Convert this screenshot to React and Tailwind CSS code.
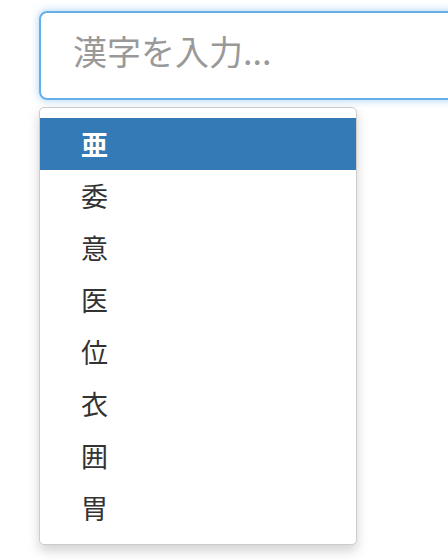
import { useState } from "react";

const kanji = ["亜", "委", "意", "医", "位", "衣", "囲", "胃"];

export default function App() {
  const [active, setActive] = useState(0);

  return (
    <div
      className="w-[448px] h-[560px] overflow-clip bg-white pt-[11px] pl-[39px]"
      style={{ fontFamily: '"Hiragino Sans", "Noto Sans CJK JP", sans-serif' }}
    >
      <input
        autoFocus
        placeholder="漢字を入力..."
        className="block w-[440px] h-[89px] rounded-[8px] border-2 border-[#66afe9] pl-[32px] pr-4 pb-[10px] text-[34px] text-[#555] placeholder:text-[#999] outline-none shadow-[0_0_8px_rgba(102,175,233,0.6)] caret-[#333]"
      />
      <ul className="mt-[7px] w-[318px] rounded-[5px] border border-[#ccc] bg-white py-[10px] shadow-[0_6px_12px_rgba(0,0,0,0.175)]">
        {kanji.map((k, i) => (
          <li
            key={k}
            onMouseEnter={() => setActive(i)}
            className={
              i === active
                ? "h-[52px] flex items-center pl-[41px] text-[27px] font-bold bg-[#337ab7] text-white"
                : "h-[52px] flex items-center pl-[41px] text-[27px] text-[#333]"
            }
          >
            {k}
          </li>
        ))}
      </ul>
    </div>
  );
}
